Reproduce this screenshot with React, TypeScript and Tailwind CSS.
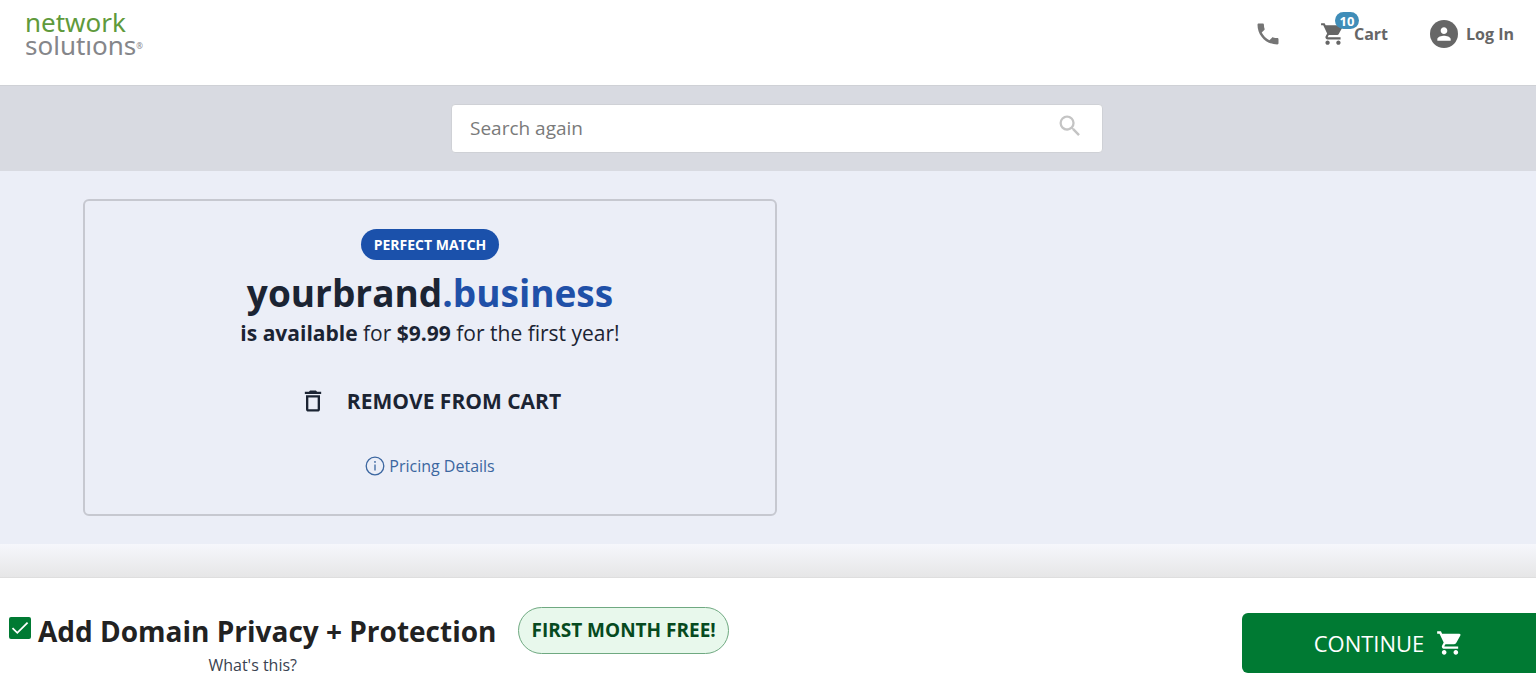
import { FC, useState } from "react";
import { MdDeleteOutline, MdPerson, MdPhone, MdSearch, MdShoppingCart } from "react-icons/md";

const Logo: FC = () => (
  <a href="#" aria-label="Network Solutions" className="flex flex-col font-['Noto_Sans'] text-[26px] leading-[23px]">
    <span className="text-[#5f9a3c]">network</span>
    <span className="flex items-center text-[#85868a]">
      solutıons
      <span className="text-[8px]">®</span>
    </span>
  </a>
);

type HeaderProps = {
  cartCount: number;
};

const Header: FC<HeaderProps> = ({ cartCount }) => (
  <header className="flex h-[86px] items-start justify-between border-b border-[#cfd1d6] bg-white pt-[11px] pr-[22px] pl-[25px]">
    <Logo />
    <nav className="flex items-center pt-[9px] text-base leading-7 font-bold text-[#666]">
      <a href="#" aria-label="Call us" className="mr-[38px] text-[#757575]">
        <MdPhone className="size-[28px]" />
      </a>
      <a href="#" className="relative mr-[42px] flex items-center gap-2">
        <MdShoppingCart className="size-[26px]" />
        <span className="absolute -top-2 left-[15px] flex h-[17px] w-6 items-center justify-center rounded-full bg-[#3f8db8] text-[13px] text-white">
          {cartCount}
        </span>
        Cart
      </a>
      <a href="#" className="flex items-center gap-2">
        <span className="flex size-7 items-center justify-center rounded-full bg-[#666] text-white">
          <MdPerson className="size-5" />
        </span>
        Log In
      </a>
    </nav>
  </header>
);

const SearchBar: FC = () => (
  <div className="bg-[#d8dae1] pt-[18px] pr-4 pb-[18px] pl-[34px]">
    <form role="search" className="mx-auto flex h-[49px] w-full max-w-[652px] items-center rounded border border-[#cfd1d6] bg-white px-[18px]">
      <input
        type="text"
        aria-label="Search again"
        placeholder="Search again"
        className="min-w-0 flex-1 bg-transparent text-[19px] outline-none placeholder:text-[#7a7a7a]"
      />
      <button type="submit" aria-label="Search" className="pb-1.5 text-[#c4c4c4]">
        <MdSearch className="size-[28px]" />
      </button>
    </form>
  </div>
);

const InfoIcon: FC = () => (
  <svg viewBox="0 0 20 20" fill="none" stroke="currentColor" className="size-5">
    <circle cx="10" cy="10" r="8.8" strokeWidth="1.3" />
    <path d="M10 8.4v6" strokeWidth="1.3" />
    <circle cx="10" cy="5.9" r="0.9" fill="currentColor" stroke="none" />
  </svg>
);

const DomainCard: FC = () => (
  <section className="flex w-full max-w-[694px] flex-col items-center rounded-md border-2 border-[#c6c8d0] px-4 pt-7 pb-9 text-[#1b2433]">
    <span className="rounded-full bg-[#1b51ab] px-[13px] text-sm leading-[31px] font-bold text-white">PERFECT MATCH</span>
    <h1 className="mt-2 text-[37px] leading-[50px] font-bold">
      yourbrand<span className="text-[#1f50a8]">.business</span>
    </h1>
    <p className="text-[21px] leading-[30px]">
      <strong>is available</strong> for <strong>$9.99</strong> for the first year!
    </p>
    <button type="button" className="mt-[38px] flex items-center gap-5 text-[21px] leading-[30px] font-bold">
      <MdDeleteOutline className="size-7" />
      REMOVE FROM CART
    </button>
    <a href="#" className="mt-[38px] flex items-center gap-1 text-base leading-6 text-[#3b66a0]">
      <InfoIcon />
      Pricing Details
    </a>
  </section>
);

const PrivacyOffer: FC = () => {
  const [checked, setChecked] = useState(true);
  return (
    <div className="flex items-start gap-[22px]">
      <div className="flex flex-col items-center pt-1">
        <label className="flex items-start gap-[7px] text-[28px] leading-10 font-bold text-[#222]">
          <span className="relative mt-1.5 flex size-[22px]">
            <input
              type="checkbox"
              checked={checked}
              onChange={() => setChecked(!checked)}
              className="size-full appearance-none rounded-xs border-2 border-[#007a33] bg-white checked:bg-[#007a33]"
            />
            {checked && (
              <svg viewBox="0 0 22 22" fill="none" stroke="white" strokeWidth="1.8" className="pointer-events-none absolute inset-0">
                <path d="M3.5 11.2l4.8 4.6L18.6 5.6" />
              </svg>
            )}
          </span>
          Add Domain Privacy + Protection
        </label>
        <a href="#" className="text-base leading-7 text-[#3a4250]">
          What's this?
        </a>
      </div>
      <span className="rounded-full border border-[#6fa981] bg-[#e8f8ec] px-3 text-[19px] leading-[45px] font-bold text-[#064a20]">
        FIRST MONTH FREE!
      </span>
    </div>
  );
};

const App: FC = () => (
  <div className="flex min-h-screen flex-col bg-white font-['Open_Sans',sans-serif]">
    <Header cartCount={10} />
    <SearchBar />
    <main className="bg-[#ebeef7] px-[83px] py-7">
      <DomainCard />
    </main>
    <div className="h-[34px] border-b border-[#dedede] bg-linear-to-b from-[#f6f7fc] to-[#e6e6e7]" />
    <footer className="flex flex-1 items-start justify-between bg-white pt-[29px] pl-[9px]">
      <PrivacyOffer />
      <button
        type="button"
        className="mt-1.5 flex h-[60px] w-[294px] items-center justify-center gap-3 rounded-l-md bg-[#007a33] text-[22px] text-white"
      >
        CONTINUE
        <MdShoppingCart className="size-7" />
      </button>
    </footer>
  </div>
);

export default App;
